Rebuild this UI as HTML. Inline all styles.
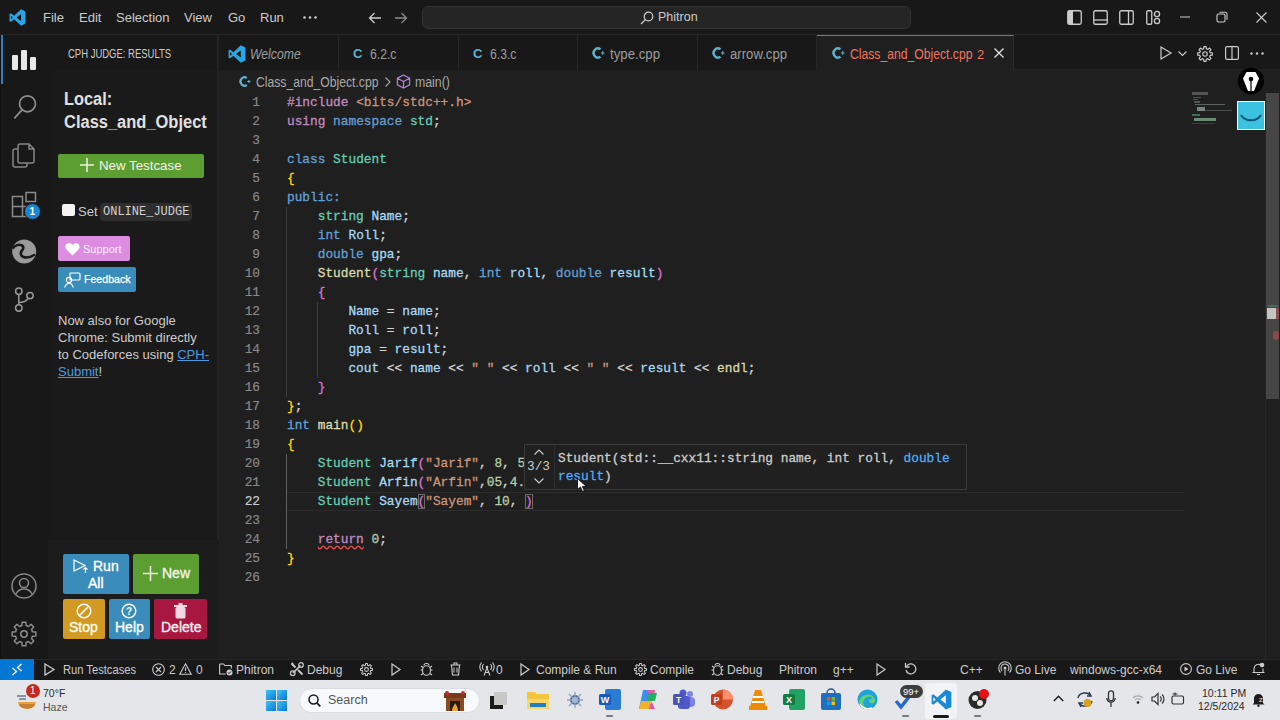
<!DOCTYPE html>
<html><head><meta charset="utf-8">
<style>
*{margin:0;padding:0;box-sizing:border-box}
html,body{width:1280px;height:720px;overflow:hidden;background:#1f1f1f;font-family:"Liberation Sans",sans-serif;color:#cccccc;position:relative}
.a{position:absolute}
.t{position:absolute;white-space:pre;line-height:1}
svg{position:absolute;overflow:visible}
#title{left:0;top:0;width:1280px;height:35px;background:#181818;border-bottom:1px solid #262626}
#act{left:0;top:35px;width:48px;height:624px;background:#181818}
#side{left:48px;top:35px;width:171px;height:624px;background:#181818;border-right:2px solid #232323}
#tabs{left:219px;top:35px;width:1061px;height:35px;background:#181818;border-bottom:1px solid #222}
#status{left:0;top:659px;width:1280px;height:21px;background:#181818;border-top:1px solid #262626}
#task{left:0;top:680px;width:1280px;height:40px;background:#e5e6e9}
.menu{font-size:13px;color:#cccccc;top:11px}
.code{font-family:"Liberation Mono",monospace;font-size:12.8px;position:absolute;left:287px;white-space:pre;height:19px;line-height:19px;color:#d4d4d4;-webkit-text-stroke:0.3px currentColor}
.ln{font-family:"Liberation Mono",monospace;font-size:12.8px;position:absolute;width:50px;left:210px;text-align:right;color:#888888;height:19px;line-height:19px;-webkit-text-stroke:0.2px currentColor}
.kw{color:#649fd4}.ct{color:#c28cbf}.ty{color:#68ccb2}.va{color:#a6d9f4}.fn{color:#dadaae}.st{color:#cb957c}.nu{color:#b7cca9}.op{color:#d4d4d4}
.b1{color:#ffd700}.b2{color:#da70d6}.b3{color:#179fff}
.tab{position:absolute;top:35px;height:35px;border-right:1px solid #262626;background:#181818}
.tabt{position:absolute;top:46.6px;font-size:14px;transform-origin:0 0;color:#9d9d9d;white-space:pre;line-height:1}
.si{position:absolute;top:663.7px;font-size:12px;color:#cccccc;white-space:pre;line-height:1}
.btn{position:absolute;color:#fff;font-size:14px;border-radius:2px}
.tb{position:absolute;font-size:12px;color:#1a1a1a;white-space:pre;line-height:1}
</style></head><body>
<!-- ============ TITLE BAR ============ -->
<div id="title" class="a"></div>
<svg style="left:9px;top:9px" width="17" height="17" viewBox="0 0 100 100"><path d="M71 2 L97 14 V86 L71 98 L30 60 L11 75 L3 70 V30 L11 25 L30 40 Z M71 30 L44 50 L71 70 Z M11 39 V61 L22 50 Z" fill="#2aa6e6" fill-rule="evenodd"/></svg>
<div class="t menu" style="left:43px">File</div>
<div class="t menu" style="left:79px">Edit</div>
<div class="t menu" style="left:116px">Selection</div>
<div class="t menu" style="left:184px">View</div>
<div class="t menu" style="left:228px">Go</div>
<div class="t menu" style="left:260px">Run</div>
<svg style="left:303px;top:16px" width="14" height="3" viewBox="0 0 14 3"><circle cx="1.5" cy="1.5" r="1.3" fill="#cccccc"/><circle cx="7" cy="1.5" r="1.3" fill="#cccccc"/><circle cx="12.5" cy="1.5" r="1.3" fill="#cccccc"/></svg>
<svg style="left:368px;top:12px" width="14" height="12" viewBox="0 0 14 12"><path d="M13 6H1.5M6.5 1L1.5 6l5 5" stroke="#cccccc" stroke-width="1.3" fill="none"/></svg>
<svg style="left:394px;top:12px" width="14" height="12" viewBox="0 0 14 12"><path d="M1 6h11.5M7.5 1l5 5-5 5" stroke="#8a8a8a" stroke-width="1.3" fill="none"/></svg>
<div class="a" style="left:422px;top:6px;width:489px;height:23px;background:#252525;border:1px solid #333;border-radius:6px"></div>
<svg style="left:640px;top:11px" width="14" height="14" viewBox="0 0 14 14"><circle cx="8.5" cy="5.5" r="4.3" stroke="#cccccc" stroke-width="1.2" fill="none"/><path d="M5.5 8.5L1 13" stroke="#cccccc" stroke-width="1.3"/></svg>
<div class="t" style="left:658px;top:11px;font-size:12.5px;color:#cccccc">Phitron</div>
<!-- layout icons -->
<svg style="left:1067px;top:10px" width="15" height="15" viewBox="0 0 15 15"><rect x="0.75" y="0.75" width="13.5" height="13.5" rx="1.5" stroke="#cccccc" stroke-width="1.3" fill="none"/><rect x="1" y="1" width="5" height="13" fill="#cccccc"/></svg>
<svg style="left:1093px;top:10px" width="15" height="15" viewBox="0 0 15 15"><rect x="0.75" y="0.75" width="13.5" height="13.5" rx="1.5" stroke="#cccccc" stroke-width="1.3" fill="none"/><path d="M1 10h13" stroke="#cccccc" stroke-width="1.3"/></svg>
<svg style="left:1119px;top:10px" width="15" height="15" viewBox="0 0 15 15"><rect x="0.75" y="0.75" width="13.5" height="13.5" rx="1.5" stroke="#cccccc" stroke-width="1.3" fill="none"/><path d="M9.5 1v13" stroke="#cccccc" stroke-width="1.3"/></svg>
<svg style="left:1146px;top:10px" width="15" height="15" viewBox="0 0 15 15"><rect x="0.75" y="0.75" width="5" height="13.5" rx="1.2" stroke="#cccccc" stroke-width="1.3" fill="none"/><circle cx="11" cy="4" r="2.6" stroke="#cccccc" stroke-width="1.3" fill="none"/><circle cx="11" cy="11" r="2.6" stroke="#cccccc" stroke-width="1.3" fill="none"/></svg>
<svg style="left:1180px;top:16px" width="11" height="2" viewBox="0 0 11 2"><path d="M0 1h10" stroke="#cccccc" stroke-width="1"/></svg>
<svg style="left:1216px;top:11px" width="12" height="12" viewBox="0 0 12 12"><rect x="1" y="3" width="8" height="8" rx="1.5" stroke="#cccccc" stroke-width="1.1" fill="none"/><path d="M3.5 1.2h5.5a2 2 0 0 1 2 2v5.5" stroke="#cccccc" stroke-width="1.1" fill="none"/></svg>
<svg style="left:1256px;top:12px" width="11" height="11" viewBox="0 0 11 11"><path d="M0.5 0.5l10 10M10.5 0.5l-10 10" stroke="#cccccc" stroke-width="1.1"/></svg>

<!-- ============ ACTIVITY BAR ============ -->
<div id="act" class="a"></div>
<div class="a" style="left:0;top:35px;width:1px;height:624px;background:#121212"></div><div class="a" style="left:1px;top:35px;width:2px;height:49px;background:#2f7bc4"></div>
<svg style="left:12px;top:48.5px" width="25" height="21" viewBox="0 0 25 21"><rect x="0" y="6" width="6" height="15" rx="1.2" fill="#e8e8e8"/><rect x="9" y="1" width="6" height="20" rx="1.2" fill="#e8e8e8"/><rect x="18" y="8" width="6" height="13" rx="1.2" fill="#e8e8e8"/></svg>
<svg style="left:13px;top:93px" width="26" height="27" viewBox="0 0 26 27"><circle cx="14.5" cy="10.8" r="8" stroke="#8e8e8e" stroke-width="1.7" fill="none"/><path d="M9 16.8L1.8 24.8" stroke="#8e8e8e" stroke-width="1.8" stroke-linecap="round"/></svg>
<svg style="left:12px;top:143px" width="24" height="25" viewBox="0 0 24 25"><path d="M8 1h9l5 5v12a2 2 0 0 1-2 2H8a2 2 0 0 1-2-2V3a2 2 0 0 1 2-2z M17 1v5h5" stroke="#858585" stroke-width="1.5" fill="none"/><path d="M6 6H3a2 2 0 0 0-2 2v14a2 2 0 0 0 2 2h10a2 2 0 0 0 2-2v-2" stroke="#858585" stroke-width="1.5" fill="none"/></svg>
<svg style="left:11px;top:191px" width="26" height="26" viewBox="0 0 26 26"><path d="M1.5 5.5h10v10h-10z M1.5 15.5h10v10h-10z M11.5 15.5h10v10h-10z M15 1.5h9.5v9h-9.5z" stroke="#8a8a8a" stroke-width="1.5" fill="none"/></svg>
<div class="a" style="left:24px;top:203px;width:17px;height:17px;border-radius:50%;background:#1a85d0;border:1.5px solid #181818"></div>
<div class="t" style="left:29.5px;top:207px;font-size:10px;font-weight:bold;color:#fff">1</div>
<svg style="left:12px;top:239px" width="25" height="25" viewBox="0 0 25 25"><circle cx="12.2" cy="12.5" r="12" fill="#9a9a9a"/><path d="M0.8 9.5C3 6 7 5 10 6.5c2 1 1.5 3.5 0 5-2 2-1.5 5.5 1.5 6.5 3 1 7 .5 11.5-2.5" stroke="#181818" stroke-width="2.6" fill="none"/></svg>
<svg style="left:14px;top:286px" width="22" height="27" viewBox="0 0 22 27"><circle cx="4.8" cy="5.2" r="3.2" stroke="#999" stroke-width="1.5" fill="none"/><circle cx="4.8" cy="22" r="3.2" stroke="#999" stroke-width="1.5" fill="none"/><circle cx="16" cy="9.6" r="3.2" stroke="#999" stroke-width="1.5" fill="none"/><path d="M4.8 8.4v10.4M14 12.3c-1.5 3-4 4-9.2 4.3" stroke="#999" stroke-width="1.5" fill="none"/></svg>
<svg style="left:11px;top:573px" width="26" height="26" viewBox="0 0 26 26"><circle cx="13" cy="13" r="12" stroke="#858585" stroke-width="1.6" fill="none"/><circle cx="13" cy="10" r="4.5" stroke="#858585" stroke-width="1.6" fill="none"/><path d="M5 21c2-4 5-5 8-5s6 1 8 5" stroke="#858585" stroke-width="1.6" fill="none"/></svg>
<svg style="left:11px;top:621px" width="26" height="26" viewBox="0 0 26 26"><path d="M21.54 10.86 L24.85 11.12 L24.85 14.88 L21.54 15.14 L20.55 17.52 L22.71 20.05 L20.05 22.71 L17.52 20.55 L15.14 21.54 L14.88 24.85 L11.12 24.85 L10.86 21.54 L8.48 20.55 L5.95 22.71 L3.29 20.05 L5.45 17.52 L4.46 15.14 L1.15 14.88 L1.15 11.12 L4.46 10.86 L5.45 8.48 L3.29 5.95 L5.95 3.29 L8.48 5.45 L10.86 4.46 L11.12 1.15 L14.88 1.15 L15.14 4.46 L17.52 5.45 L20.05 3.29 L22.71 5.95 L20.55 8.48Z" stroke="#8a8a8a" stroke-width="1.5" fill="none" stroke-linejoin="round"/><circle cx="13" cy="13" r="3.2" stroke="#8a8a8a" stroke-width="1.5" fill="none"/></svg>

<!-- ============ SIDEBAR ============ -->
<div id="side" class="a"></div>
<div class="a" style="left:52px;top:70px;width:165px;height:467px;background:#1a1a1a"></div>
<div class="a" style="left:48px;top:540px;width:171px;height:119px;background:#1c1c1c"></div>
<div class="t" style="left:68px;top:47.7px;font-size:12px;color:#cccccc;transform:scaleX(0.79);transform-origin:0 0">CPH JUDGE: RESULTS</div>
<div class="t" style="left:64px;top:90px;font-size:18px;font-weight:bold;color:#e0e0e0;transform:scaleX(0.91);transform-origin:0 0">Local:</div>
<div class="t" style="left:64px;top:113px;font-size:18px;font-weight:bold;color:#e0e0e0;transform:scaleX(0.915);transform-origin:0 0">Class_and_Object</div>
<div class="btn" style="left:58px;top:154px;width:146px;height:24px;background:#5c9e31"></div>
<svg style="left:80px;top:158px" width="14" height="14" viewBox="0 0 14 14"><path d="M7 0v14M0 7h14" stroke="#f0f0e0" stroke-width="1.5"/></svg>
<div class="t" style="left:99px;top:159px;font-size:13.3px;color:#f4f4e8">New Testcase</div>
<div class="a" style="left:62px;top:204px;width:13px;height:12px;background:#f4f4f4;border-radius:2px"></div>
<div class="t" style="left:78px;top:205px;font-size:13px;color:#cccccc">Set</div>
<div class="a" style="left:100px;top:203px;width:92px;height:18px;background:#2e2e2e;border-radius:4px"></div>
<div class="t" style="left:103px;top:206px;font-family:'Liberation Mono',monospace;font-size:12px;color:#d0d0d0">ONLINE_JUDGE</div>
<div class="btn" style="left:58px;top:236px;width:72px;height:25px;background:#dd8de0"></div>
<svg style="left:65px;top:242px" width="15" height="14" viewBox="0 0 15 14"><path d="M7.5 13.5L1.5 7.5C-0.5 5.5 0.5 1 4 1c1.7 0 2.8 1 3.5 2 0.7-1 1.8-2 3.5-2 3.5 0 4.5 4.5 2.5 6.5z" fill="#ffffff"/></svg>
<div class="t" style="left:83px;top:243.5px;font-size:11px;color:#fbeefb">Support</div>
<div class="btn" style="left:58px;top:267px;width:78px;height:25px;background:#3a8dbb"></div>
<svg style="left:64px;top:272px" width="17" height="16" viewBox="0 0 17 16"><rect x="6" y="1" width="10" height="7" rx="1" stroke="#fff" stroke-width="1.2" fill="none"/><circle cx="5" cy="8" r="2.6" stroke="#fff" stroke-width="1.2" fill="none"/><path d="M0.8 15.5c0.5-3 2-4 4.2-4s3.7 1 4.2 4" stroke="#fff" stroke-width="1.2" fill="none"/></svg>
<div class="t" style="left:84px;top:274px;font-size:10.6px;color:#ffffff;-webkit-text-stroke:0.25px #fff">Feedback</div>
<div class="t" style="left:58px;top:311.5px;font-size:13px;color:#cccccc;line-height:17.3px">Now also for Google
Chrome: Submit directly
to Codeforces using <span style="color:#4a9ae0;text-decoration:underline">CPH-</span>
<span style="color:#4a9ae0;text-decoration:underline">Submit</span>!</div>
<!-- ============ TABS ============ -->
<div id="tabs" class="a"></div>
<div class="tab" style="left:219px;width:120px"></div>
<div class="tab" style="left:339px;width:120px"></div>
<div class="tab" style="left:459px;width:119px"></div>
<div class="tab" style="left:578px;width:120px"></div>
<div class="tab" style="left:698px;width:119px"></div>
<div class="a" style="left:817px;top:35px;width:197px;height:36px;background:#1f1f1f;border-top:1px solid #3b8eb0;border-right:1px solid #2b2b2b"></div>
<svg style="left:228px;top:45px" width="18" height="18" viewBox="0 0 100 100"><path d="M71 2 L97 14 V86 L71 98 L30 60 L11 75 L3 70 V30 L11 25 L30 40 Z M71 30 L44 50 L71 70 Z M11 39 V61 L22 50 Z" fill="#2aa6e6" fill-rule="evenodd"/></svg>
<div class="tabt" style="left:250px;font-style:italic;transform:scaleX(0.873)">Welcome</div>
<div class="tabt" style="left:353px;top:47px;font-weight:bold;color:#5fb2cf;font-size:13px">C</div>
<div class="tabt" style="left:370px;transform:scaleX(0.87)">6.2.c</div>
<div class="tabt" style="left:473px;top:47px;font-weight:bold;color:#5fb2cf;font-size:13px">C</div>
<div class="tabt" style="left:490px;transform:scaleX(0.87)">6.3.c</div>
<svg style="left:592px;top:47px" width="13" height="12" viewBox="0 0 13 12"><path d="M8.5 2.2A4.5 4.5 0 1 0 8.5 9.8" stroke="#5fb2cf" stroke-width="2.4" fill="none"/><path d="M9 6h3.5M10.75 4.25v3.5" stroke="#5fb2cf" stroke-width="1.1"/></svg>
<div class="tabt" style="left:610px;transform:scaleX(0.945)">type.cpp</div>
<svg style="left:712px;top:47px" width="13" height="12" viewBox="0 0 13 12"><path d="M8.5 2.2A4.5 4.5 0 1 0 8.5 9.8" stroke="#5fb2cf" stroke-width="2.4" fill="none"/><path d="M9 6h3.5M10.75 4.25v3.5" stroke="#5fb2cf" stroke-width="1.1"/></svg>
<div class="tabt" style="left:730px;transform:scaleX(0.94)">arrow.cpp</div>
<svg style="left:832px;top:47px" width="13" height="12" viewBox="0 0 13 12"><path d="M8.5 2.2A4.5 4.5 0 1 0 8.5 9.8" stroke="#5fb2cf" stroke-width="2.4" fill="none"/><path d="M9 6h3.5M10.75 4.25v3.5" stroke="#5fb2cf" stroke-width="1.1"/></svg>
<div class="tabt" style="left:850px;color:#f0755f;transform:scaleX(0.869)">Class_and_Object.cpp</div>
<div class="tabt" style="left:977px;color:#f0755f;font-size:13px;top:47.5px">2</div>
<svg style="left:994px;top:48px" width="10" height="10" viewBox="0 0 10 10"><path d="M0.5 0.5l9 9M9.5 0.5l-9 9" stroke="#e0e0e0" stroke-width="1.4"/></svg>
<svg style="left:1160px;top:46px" width="12" height="14" viewBox="0 0 12 14"><path d="M1 1l10 6-10 6z" stroke="#cccccc" stroke-width="1.2" fill="none"/></svg>
<svg style="left:1178px;top:51px" width="9" height="5" viewBox="0 0 9 5"><path d="M0.5 0.5l4 4 4-4" stroke="#cccccc" stroke-width="1.1" fill="none"/></svg>
<svg style="left:1197px;top:46px" width="16" height="16" viewBox="0 0 26 26"><path d="M21.54 10.86 L24.85 11.12 L24.85 14.88 L21.54 15.14 L20.55 17.52 L22.71 20.05 L20.05 22.71 L17.52 20.55 L15.14 21.54 L14.88 24.85 L11.12 24.85 L10.86 21.54 L8.48 20.55 L5.95 22.71 L3.29 20.05 L5.45 17.52 L4.46 15.14 L1.15 14.88 L1.15 11.12 L4.46 10.86 L5.45 8.48 L3.29 5.95 L5.95 3.29 L8.48 5.45 L10.86 4.46 L11.12 1.15 L14.88 1.15 L15.14 4.46 L17.52 5.45 L20.05 3.29 L22.71 5.95 L20.55 8.48Z" stroke="#cccccc" stroke-width="1.9" fill="none" stroke-linejoin="round"/><circle cx="13" cy="13" r="3.6" stroke="#cccccc" stroke-width="1.9" fill="none"/></svg>
<svg style="left:1225px;top:46px" width="14" height="14" viewBox="0 0 14 14"><rect x="0.6" y="0.6" width="12.8" height="12.8" rx="1.5" stroke="#cccccc" stroke-width="1.2" fill="none"/><path d="M7 1v12" stroke="#cccccc" stroke-width="1.2"/></svg>
<svg style="left:1250px;top:52px" width="14" height="3" viewBox="0 0 14 3"><circle cx="1.5" cy="1.5" r="1.2" fill="#cccccc"/><circle cx="7" cy="1.5" r="1.2" fill="#cccccc"/><circle cx="12.5" cy="1.5" r="1.2" fill="#cccccc"/></svg>
<!-- breadcrumbs -->
<svg style="left:239px;top:76px" width="12" height="11" viewBox="0 0 13 12"><path d="M8.5 2.2A4.5 4.5 0 1 0 8.5 9.8" stroke="#5fb2cf" stroke-width="2.4" fill="none"/><path d="M9 6h3.5M10.75 4.25v3.5" stroke="#5fb2cf" stroke-width="1.1"/></svg>
<div class="t" style="left:256px;top:75.2px;font-size:14px;color:#a9a9a9;transform:scaleX(0.869);transform-origin:0 0">Class_and_Object.cpp</div>
<svg style="left:385px;top:77px" width="6" height="10" viewBox="0 0 6 10"><path d="M0.5 0.5l4.5 4.5-4.5 4.5" stroke="#a9a9a9" stroke-width="1.1" fill="none"/></svg>
<svg style="left:396px;top:74px" width="15" height="15" viewBox="0 0 16 16"><path d="M8 1l6.5 3.5v7L8 15 1.5 11.5v-7z M1.5 4.5L8 8l6.5-3.5 M8 8v7" stroke="#b180d7" stroke-width="1.3" fill="none"/></svg>
<div class="t" style="left:415px;top:75.2px;font-size:14px;color:#a9a9a9;transform:scaleX(0.88);transform-origin:0 0">main()</div>
<!-- ============ EDITOR ============ -->
<div class="ln" style="top:93px">1</div>
<div class="ln" style="top:112px">2</div>
<div class="ln" style="top:131px">3</div>
<div class="ln" style="top:150px">4</div>
<div class="ln" style="top:169px">5</div>
<div class="ln" style="top:188px">6</div>
<div class="ln" style="top:207px">7</div>
<div class="ln" style="top:226px">8</div>
<div class="ln" style="top:245px">9</div>
<div class="ln" style="top:264px">10</div>
<div class="ln" style="top:283px">11</div>
<div class="ln" style="top:302px">12</div>
<div class="ln" style="top:321px">13</div>
<div class="ln" style="top:340px">14</div>
<div class="ln" style="top:359px">15</div>
<div class="ln" style="top:378px">16</div>
<div class="ln" style="top:397px">17</div>
<div class="ln" style="top:416px">18</div>
<div class="ln" style="top:435px">19</div>
<div class="ln" style="top:454px">20</div>
<div class="ln" style="top:473px">21</div>
<div class="ln" style="top:492px;color:#cccccc">22</div>
<div class="ln" style="top:511px">23</div>
<div class="ln" style="top:530px">24</div>
<div class="ln" style="top:549px">25</div>
<div class="ln" style="top:568px">26</div>
<!-- indent guides -->
<div class="a" style="left:286px;top:207px;width:1px;height:190px;background:#404040"></div>
<div class="a" style="left:317px;top:302px;width:1px;height:76px;background:#404040"></div>
<div class="a" style="left:286px;top:454px;width:1px;height:95px;background:#606060"></div>
<!-- current line -->
<div class="a" style="left:287px;top:492px;width:898px;height:19px;border-top:1px solid #2c2c2c;border-bottom:1px solid #2c2c2c"></div>
<div class="code" style="top:93px"><span class="ct">#include</span> <span class="st">&lt;bits/stdc++.h&gt;</span></div>
<div class="code" style="top:112px"><span class="ct">using</span> <span class="kw">namespace</span> <span class="ty">std</span>;</div>
<div class="code" style="top:150px"><span class="kw">class</span> <span class="ty">Student</span></div>
<div class="code" style="top:169px"><span class="b1">{</span></div>
<div class="code" style="top:188px"><span class="kw">public:</span></div>
<div class="code" style="top:207px">    <span class="ty">string</span> <span class="va">Name</span>;</div>
<div class="code" style="top:226px">    <span class="kw">int</span> <span class="va">Roll</span>;</div>
<div class="code" style="top:245px">    <span class="kw">double</span> <span class="va">gpa</span>;</div>
<div class="code" style="top:264px">    <span class="fn">Student</span><span class="b2">(</span><span class="ty">string</span> <span class="va">name</span>, <span class="kw">int</span> <span class="va">roll</span>, <span class="kw">double</span> <span class="va">result</span><span class="b2">)</span></div>
<div class="code" style="top:283px">    <span class="b2">{</span></div>
<div class="code" style="top:302px">        <span class="va">Name</span> = <span class="va">name</span>;</div>
<div class="code" style="top:321px">        <span class="va">Roll</span> = <span class="va">roll</span>;</div>
<div class="code" style="top:340px">        <span class="va">gpa</span> = <span class="va">result</span>;</div>
<div class="code" style="top:359px">        <span class="va">cout</span> &lt;&lt; <span class="va">name</span> &lt;&lt; <span class="st">" "</span> &lt;&lt; <span class="va">roll</span> &lt;&lt; <span class="st">" "</span> &lt;&lt; <span class="va">result</span> &lt;&lt; <span class="fn">endl</span>;</div>
<div class="code" style="top:378px">    <span class="b2">}</span></div>
<div class="code" style="top:397px"><span class="b1">}</span>;</div>
<div class="code" style="top:416px"><span class="kw">int</span> <span class="fn">main</span><span class="b1">()</span></div>
<div class="code" style="top:435px"><span class="b1">{</span></div>
<div class="code" style="top:454px">    <span class="ty">Student</span> <span class="va">Jarif</span><span class="b2">(</span><span class="st">"Jarif"</span>, <span class="nu">8</span>, <span class="nu">5</span></div>
<div class="code" style="top:473px">    <span class="ty">Student</span> <span class="va">Arfin</span><span class="b2">(</span><span class="st">"Arfin"</span>,<span class="nu">05</span>,<span class="nu">4.</span></div>
<div class="code" style="top:492px">    <span class="ty">Student</span> <span class="va">Sayem</span><span class="b2" style="outline:1px solid #6a6a6a;outline-offset:-1px">(</span><span class="st">"Sayem"</span>, <span class="nu">10</span>, <span class="b2" style="outline:1px solid #6a6a6a;outline-offset:-1px">)</span></div>
<div class="code" style="top:530px">    <span class="ct" style="text-decoration:underline wavy #f14c4c;text-underline-offset:2px">return</span> <span class="nu">0</span>;</div>
<div class="code" style="top:549px"><span class="b1">}</span></div>
<!-- hover widget -->
<div class="a" style="left:524px;top:444px;width:443px;height:46px;background:#202020;border:1px solid #3a3a3a"></div>
<div class="a" style="left:554px;top:445px;width:1px;height:44px;background:#2e2e2e"></div>
<svg style="left:534px;top:449px" width="10" height="6" viewBox="0 0 10 6"><path d="M0.5 5.5l4.5-4.5 4.5 4.5" stroke="#cccccc" stroke-width="1.1" fill="none"/></svg>
<svg style="left:534px;top:478px" width="10" height="6" viewBox="0 0 10 6"><path d="M0.5 0.5l4.5 4.5 4.5-4.5" stroke="#cccccc" stroke-width="1.1" fill="none"/></svg>
<div class="t" style="left:527px;top:461px;font-family:'Liberation Mono',monospace;font-size:12.75px;color:#cccccc">3/3</div>
<div class="code" style="left:558px;top:449px;color:#cccccc">Student(std::__cxx11::string name, int roll, <span style="color:#4daafc">double</span></div>
<div class="code" style="left:558px;top:467px;color:#cccccc"><span style="color:#4daafc">result</span>)</div>
<!-- mouse cursor -->
<svg style="left:577px;top:478px" width="9" height="14" viewBox="0 0 9 14"><path d="M0.5 0.5v11l3-2.5 2 4.5 1.8-.8-2-4.3h4z" fill="#ffffff" stroke="#000" stroke-width="0.8"/></svg>
<!-- minimap -->
<div class="a" style="left:1265px;top:92px;width:15px;height:567px;background:#1f1f1f;border-left:1px solid #262626"></div>
<div class="a" style="left:1266px;top:93px;width:13px;height:306px;background:#464646"></div>
<div class="a" style="left:1192px;top:92px;width:16px;height:3px;background:#555"></div>
<div class="a" style="left:1193px;top:97px;width:8px;height:1px;background:#3f5a52"></div>
<div class="a" style="left:1193px;top:99px;width:5px;height:1px;background:#3f5a52"></div>
<div class="a" style="left:1194px;top:101px;width:6px;height:2px;background:#4a5a55"></div>
<div class="a" style="left:1195px;top:104px;width:30px;height:1px;background:#5a6560"></div>
<div class="a" style="left:1197px;top:107px;width:8px;height:4px;background:#7a8580"></div>
<div class="a" style="left:1205px;top:110px;width:27px;height:1px;background:#4a4f4d"></div>
<div class="a" style="left:1192px;top:114px;width:8px;height:2px;background:#3f6a55"></div>
<div class="a" style="left:1194px;top:118px;width:22px;height:3px;background:#6a8a78"></div>
<div class="a" style="left:1192px;top:123px;width:23px;height:1px;background:#6a2a2a"></div>
<svg style="left:1238px;top:68px" width="26" height="26" viewBox="0 0 26 26"><circle cx="13" cy="13" r="13.2" fill="#000"/><path d="M8.5 4H17.5L21 10.5L16 23H10L5 10.5Z" fill="#fff"/><circle cx="13" cy="11" r="2.3" fill="#000"/><rect x="12.4" y="11" width="1.2" height="12" fill="#000"/></svg>
<div class="a" style="left:1237px;top:101px;width:28px;height:29px;background:#3bc2e0;border:1.5px solid #f0f8ff"></div>
<svg style="left:1240px;top:113px" width="22" height="9" viewBox="0 0 22 9"><path d="M1 2c4 7 16 7 20 0" stroke="#0d5570" stroke-width="2" fill="none"/></svg>
<div class="a" style="left:1267px;top:308px;width:9px;height:11px;background:#c4c4c4"></div><div class="a" style="left:1276px;top:308px;width:3px;height:11px;background:#8a5050"></div><div class="a" style="left:1268px;top:305px;width:10px;height:2px;background:#4a6a55"></div><div class="a" style="left:1273px;top:331px;width:6px;height:9px;background:#8a4a4a;border-radius:3px"></div>
<!-- ============ STATUS BAR ============ -->
<div id="status" class="a"></div>
<div class="a" style="left:0;top:659px;width:34px;height:21px;background:#0078d4"></div>
<svg style="left:11px;top:663px" width="12" height="13" viewBox="0 0 12 13"><path d="M10.5 1L6.5 4.5 10.5 8 M1.5 5L5.5 8.5 1.5 12" stroke="#ffffff" stroke-width="1.3" fill="none"/></svg>
<svg style="left:44px;top:663px" width="11" height="13" viewBox="0 0 11 13"><path d="M1 1l9 5.5-9 5.5z" stroke="#cccccc" stroke-width="1.3" fill="none"/></svg>
<div class="si" style="left:63px;transform:scaleX(0.93);transform-origin:0 0">Run Testcases</div>
<svg style="left:152px;top:663px" width="13" height="13" viewBox="0 0 13 13"><circle cx="6.5" cy="6.5" r="5.8" stroke="#cccccc" stroke-width="1.1" fill="none"/><path d="M4 4l5 5M9 4l-5 5" stroke="#cccccc" stroke-width="1.1"/></svg>
<div class="si" style="left:169px">2</div>
<svg style="left:179px;top:663px" width="13" height="12" viewBox="0 0 13 12"><path d="M6.5 0.8L12.2 11.2H0.8z" stroke="#cccccc" stroke-width="1.1" fill="none"/><path d="M6.5 4.5v3.5M6.5 9v1" stroke="#cccccc" stroke-width="1.1"/></svg>
<div class="si" style="left:196px">0</div>
<svg style="left:219px;top:662px" width="14" height="14" viewBox="0 0 14 14"><path d="M0.6 2h4l1.2 1.5h6.5v3 M0.6 2v10h6" stroke="#cccccc" stroke-width="1.1" fill="none"/><circle cx="10.5" cy="10.5" r="3" fill="#cccccc"/><path d="M9 10.5l1 1 2-2" stroke="#181818" stroke-width="1" fill="none"/></svg>
<div class="si" style="left:236px">Phitron</div>
<svg style="left:290px;top:662px" width="14" height="14" viewBox="0 0 14 14"><path d="M1.5 1.5l4 4M8 8l4.5 4.5" stroke="#cccccc" stroke-width="1.8"/><path d="M1 1l1.5 -0.5 1 1 -0.5 1.5z" fill="#cccccc"/><path d="M3 11l7.5-7.5" stroke="#cccccc" stroke-width="1.6"/><circle cx="11" cy="3" r="2.3" stroke="#cccccc" stroke-width="1.2" fill="none"/><circle cx="2.8" cy="11.2" r="2.3" stroke="#cccccc" stroke-width="1.2" fill="none"/></svg>
<div class="si" style="left:307px">Debug</div>
<svg style="left:360px;top:663px" width="13" height="13" viewBox="0 0 26 26"><path d="M21.54 10.86 L24.85 11.12 L24.85 14.88 L21.54 15.14 L20.55 17.52 L22.71 20.05 L20.05 22.71 L17.52 20.55 L15.14 21.54 L14.88 24.85 L11.12 24.85 L10.86 21.54 L8.48 20.55 L5.95 22.71 L3.29 20.05 L5.45 17.52 L4.46 15.14 L1.15 14.88 L1.15 11.12 L4.46 10.86 L5.45 8.48 L3.29 5.95 L5.95 3.29 L8.48 5.45 L10.86 4.46 L11.12 1.15 L14.88 1.15 L15.14 4.46 L17.52 5.45 L20.05 3.29 L22.71 5.95 L20.55 8.48Z" stroke="#cccccc" stroke-width="2.1" fill="none" stroke-linejoin="round"/><circle cx="13" cy="13" r="3.8" stroke="#cccccc" stroke-width="2.1" fill="none"/></svg>
<svg style="left:391px;top:663px" width="10" height="13" viewBox="0 0 10 13"><path d="M1 1l8 5.5-8 5.5z" stroke="#cccccc" stroke-width="1.2" fill="none"/></svg>
<svg style="left:420px;top:662px" width="13" height="14" viewBox="0 0 13 14"><ellipse cx="6.5" cy="8.5" rx="4" ry="4.8" stroke="#cccccc" stroke-width="1.1" fill="none"/><path d="M4 3.5a2.5 2 0 0 1 5 0M0.5 8h2M10.5 8h2M1 4l2 1.5M12 4l-2 1.5M1 13l2-1.5M12 13l-2-1.5" stroke="#cccccc" stroke-width="1.1" fill="none"/></svg>
<svg style="left:450px;top:662px" width="11" height="14" viewBox="0 0 11 14"><path d="M0.5 3h10M4 3V1h3v2M1.5 3l1 10h6l1-10" stroke="#cccccc" stroke-width="1.1" fill="none"/><path d="M4 5.5v5M7 5.5v5" stroke="#cccccc" stroke-width="1"/></svg>
<svg style="left:480px;top:662px" width="14" height="14" viewBox="0 0 14 14"><circle cx="7" cy="5" r="1.3" fill="#cccccc"/><path d="M7 6l-3 7.5M7 6l3 7.5M5 10.5h4M3.5 2a5 5 0 0 0 0 6M10.5 2a5 5 0 0 1 0 6M1.5 0.5a7.5 7.5 0 0 0 0 9M12.5 0.5a7.5 7.5 0 0 1 0 9" stroke="#cccccc" stroke-width="1.1" fill="none"/></svg>
<div class="si" style="left:496px">0</div>
<svg style="left:520px;top:663px" width="10" height="13" viewBox="0 0 10 13"><path d="M1 1l8 5.5-8 5.5z" stroke="#cccccc" stroke-width="1.2" fill="none"/></svg>
<div class="si" style="left:536px">Compile &amp; Run</div>
<svg style="left:634px;top:663px" width="13" height="13" viewBox="0 0 26 26"><path d="M21.54 10.86 L24.85 11.12 L24.85 14.88 L21.54 15.14 L20.55 17.52 L22.71 20.05 L20.05 22.71 L17.52 20.55 L15.14 21.54 L14.88 24.85 L11.12 24.85 L10.86 21.54 L8.48 20.55 L5.95 22.71 L3.29 20.05 L5.45 17.52 L4.46 15.14 L1.15 14.88 L1.15 11.12 L4.46 10.86 L5.45 8.48 L3.29 5.95 L5.95 3.29 L8.48 5.45 L10.86 4.46 L11.12 1.15 L14.88 1.15 L15.14 4.46 L17.52 5.45 L20.05 3.29 L22.71 5.95 L20.55 8.48Z" stroke="#cccccc" stroke-width="2.1" fill="none" stroke-linejoin="round"/><circle cx="13" cy="13" r="3.8" stroke="#cccccc" stroke-width="2.1" fill="none"/></svg>
<div class="si" style="left:650px">Compile</div>
<svg style="left:711px;top:662px" width="13" height="14" viewBox="0 0 13 14"><ellipse cx="6.5" cy="8.5" rx="4" ry="4.8" stroke="#cccccc" stroke-width="1.1" fill="none"/><path d="M4 3.5a2.5 2 0 0 1 5 0M0.5 8h2M10.5 8h2M1 4l2 1.5M12 4l-2 1.5M1 13l2-1.5M12 13l-2-1.5" stroke="#cccccc" stroke-width="1.1" fill="none"/></svg>
<div class="si" style="left:727px">Debug</div>
<div class="si" style="left:779px">Phitron</div>
<div class="si" style="left:833px">g++</div>
<svg style="left:876px;top:663px" width="10" height="13" viewBox="0 0 10 13"><path d="M1 1l8 5.5-8 5.5z" stroke="#cccccc" stroke-width="1.2" fill="none"/></svg>
<svg style="left:904px;top:662px" width="13" height="13" viewBox="0 0 13 13"><path d="M2.5 4.5A5 5 0 1 1 2 8" stroke="#cccccc" stroke-width="1.3" fill="none"/><path d="M1.5 1v4h4" stroke="#cccccc" stroke-width="1.3" fill="none"/></svg>
<div class="si" style="left:960px">C++</div>
<svg style="left:999px;top:662px" width="12" height="14" viewBox="0 0 12 14"><circle cx="6" cy="6" r="1.5" fill="#cccccc"/><path d="M6 7.5V13.5M3.2 8.8a4 4 0 1 1 5.6 0M1.5 10.5a6.3 6.3 0 1 1 9 0" stroke="#cccccc" stroke-width="1.1" fill="none"/></svg>
<div class="si" style="left:1015px">Go Live</div>
<div class="si" style="left:1070px">windows-gcc-x64</div>
<svg style="left:1180px;top:663px" width="12" height="12" viewBox="0 0 12 12"><circle cx="6" cy="6" r="5.4" stroke="#cccccc" stroke-width="1.1" fill="none"/><path d="M4.5 3.5l4 2.5-4 2.5z" fill="#cccccc"/></svg>
<div class="si" style="left:1196px">Go Live</div>
<svg style="left:1252px;top:662px" width="13" height="14" viewBox="0 0 13 14"><path d="M2 10.5V6.5a4.5 4.5 0 0 1 7-3.5M11 6.5v4M0.5 10.5h12M5 12.5h3" stroke="#cccccc" stroke-width="1.1" fill="none"/><circle cx="10" cy="3" r="2.3" fill="#cccccc"/></svg>
<!-- ============ TASKBAR ============ -->
<div id="task" class="a"></div>
<svg style="left:16px;top:690px" width="22" height="22" viewBox="0 0 22 22"><path d="M2 12a9 6 0 0 0 18 0z" fill="#e8a040"/><path d="M3 14a8 5 0 0 0 16 0" fill="#c8802a"/><path d="M1 6h9M3 9h7" stroke="#6a7a8a" stroke-width="1.4"/></svg>
<div class="a" style="left:26px;top:684px;width:14px;height:14px;border-radius:50%;background:#c42b1c"></div>
<div class="t" style="left:30px;top:686px;font-size:10px;color:#fff">1</div>
<div class="tb" style="left:43px;top:688px;font-size:10.5px;color:#2a2a2a">70°F</div>
<div class="tb" style="left:43px;top:702px;font-size:10.5px;color:#555">Haze</div>
<svg style="left:266px;top:690px" width="21" height="21" viewBox="0 0 21 21"><defs><linearGradient id="wg" x1="0" y1="0" x2="1" y2="1"><stop offset="0" stop-color="#3ec3f5"/><stop offset="1" stop-color="#0a78d4"/></linearGradient></defs><rect x="0" y="0" width="10" height="10" fill="url(#wg)"/><rect x="11" y="0" width="10" height="10" fill="url(#wg)"/><rect x="0" y="11" width="10" height="10" fill="url(#wg)"/><rect x="11" y="11" width="10" height="10" fill="url(#wg)"/></svg>
<div class="a" style="left:299px;top:688px;width:181px;height:25px;background:#f8f9fb;border:1px solid #dcdde0;border-radius:13px"></div>
<svg style="left:308px;top:694px" width="13" height="13" viewBox="0 0 13 13"><circle cx="5.5" cy="5.5" r="4.5" stroke="#1a1a1a" stroke-width="1.5" fill="none"/><path d="M8.8 8.8L12.3 12.3" stroke="#1a1a1a" stroke-width="1.7"/></svg>
<div class="tb" style="left:328px;top:694px;font-size:12.5px;color:#555">Search</div>
<svg style="left:443px;top:690px" width="24" height="21" viewBox="0 0 24 21"><rect x="1" y="3" width="22" height="5" fill="#7a3a1a"/><rect x="3" y="8" width="18" height="13" fill="#8a4a22"/><rect x="7" y="11" width="10" height="10" fill="#2a1a10"/><path d="M9 21c0-4 3-6 3-8 1 2 3 4 3 8z" fill="#f0a030"/><circle cx="4" cy="3" r="2" fill="#c03030"/><circle cx="20" cy="3" r="2" fill="#c03030"/></svg>
<svg style="left:490px;top:692px" width="17" height="17" viewBox="0 0 17 17"><rect x="4" y="0" width="13" height="13" fill="#c8c8c8"/><path d="M0 4h4v9h9v4H0z" fill="#1a1a1a"/></svg>
<svg style="left:527px;top:690px" width="22" height="19" viewBox="0 0 22 19"><path d="M0 2h8l2 2h12v15H0z" fill="#f2c53d"/><rect x="0" y="9" width="22" height="10" fill="#f6d66a"/><rect x="3" y="13" width="16" height="4" fill="#1f7fbf"/></svg>
<svg style="left:565px;top:690px" width="20" height="20" viewBox="0 0 20 20"><circle cx="10" cy="10" r="5" fill="#5a6a8a"/><path d="M2 10h16M10 2v16M4 4l12 12M16 4L4 16" stroke="#8aa0c0" stroke-width="1.3"/><circle cx="10" cy="10" r="3" fill="#a0b8d8"/></svg>
<svg style="left:599px;top:689px" width="22" height="21" viewBox="0 0 22 21"><rect x="6" y="0" width="16" height="21" rx="2" fill="#2b7cd3"/><rect x="0" y="5" width="12" height="11" rx="1.5" fill="#185abd"/><text x="6" y="14" font-size="9" font-weight="bold" font-family="Liberation Sans" text-anchor="middle" fill="#fff">W</text></svg>
<div class="a" style="left:606px;top:715px;width:7px;height:2px;background:#7a7a7a;border-radius:1px"></div>
<svg style="left:637px;top:689px" width="22" height="21" viewBox="0 0 22 21"><path d="M6 1h8l-4 19H2z" fill="#3a8ef0"/><path d="M10 1h8l-2 10-6 9h8l-4-9z" fill="#e05aa0"/><path d="M4 12h10l-2 8H2z" fill="#f0b030"/><path d="M12 4h8l-2 8h-8z" fill="#20b060"/></svg>
<svg style="left:673px;top:689px" width="22" height="21" viewBox="0 0 22 21"><circle cx="17" cy="5" r="3" fill="#7b83eb"/><rect x="12" y="8" width="10" height="10" rx="4" fill="#7b83eb"/><circle cx="10" cy="4" r="3.5" fill="#5059c9"/><rect x="5" y="7" width="12" height="13" rx="3" fill="#5059c9"/><rect x="0" y="5" width="11" height="11" rx="1.5" fill="#4b53bc"/><text x="5.5" y="13.5" font-size="8.5" font-weight="bold" font-family="Liberation Sans" text-anchor="middle" fill="#fff">T</text></svg>
<svg style="left:711px;top:689px" width="22" height="21" viewBox="0 0 22 21"><circle cx="12" cy="10.5" r="10" fill="#d35230"/><path d="M12 0.5a10 10 0 0 1 10 10H12z" fill="#ff8f6b"/><rect x="0" y="5" width="11" height="11" rx="1.5" fill="#c43e1c"/><text x="5.5" y="13.5" font-size="8.5" font-weight="bold" font-family="Liberation Sans" text-anchor="middle" fill="#fff">P</text></svg>
<svg style="left:749px;top:689px" width="18" height="21" viewBox="0 0 18 21"><path d="M6 1h6l5 17H1z" fill="#f08a00"/><path d="M4 8h10M3 13h12" stroke="#fff" stroke-width="2"/><rect x="0" y="17" width="18" height="4" fill="#f08a00"/></svg>
<svg style="left:783px;top:689px" width="22" height="21" viewBox="0 0 22 21"><rect x="6" y="0" width="16" height="21" rx="2" fill="#21a366"/><rect x="0" y="5" width="12" height="11" rx="1.5" fill="#107c41"/><text x="6" y="14" font-size="9" font-weight="bold" font-family="Liberation Sans" text-anchor="middle" fill="#fff">X</text></svg>
<svg style="left:821px;top:689px" width="20" height="21" viewBox="0 0 20 21"><path d="M6 4a4 4 0 0 1 8 0" stroke="#1a5aa0" stroke-width="1.5" fill="none"/><rect x="0" y="4" width="20" height="17" rx="2" fill="#1f6fc0"/><rect x="6" y="8" width="3.5" height="3.5" fill="#f25022"/><rect x="10.5" y="8" width="3.5" height="3.5" fill="#7fba00"/><rect x="6" y="12.5" width="3.5" height="3.5" fill="#00a4ef"/><rect x="10.5" y="12.5" width="3.5" height="3.5" fill="#ffb900"/></svg>
<svg style="left:857px;top:689px" width="21" height="21" viewBox="0 0 21 21"><circle cx="10.5" cy="10.5" r="10" fill="#1fa0e0"/><path d="M2 13c1-6 7-9 12-7 4 2 5 6 3 8-2 1-5 0-5-2 0-3 4-2 4-2-1-3-7-3-9 1-2 3 0 7 4 8-6 0-9-3-9-6z" fill="#5fd36f"/><path d="M3 15c2 4 7 6 12 4" stroke="#fff" stroke-width="1.5" fill="none"/></svg>
<svg style="left:895px;top:692px" width="18" height="17" viewBox="0 0 18 17"><path d="M1 9l5 6 11-14" stroke="#2a6ad0" stroke-width="3.5" fill="none"/></svg>
<div class="a" style="left:900px;top:685px;width:23px;height:13px;border-radius:7px;background:#3c3c3c"></div>
<div class="tb" style="left:903px;top:687px;font-size:9.5px;color:#fff">99+</div>
<div class="a" style="left:902px;top:715px;width:7px;height:2px;background:#7a7a7a;border-radius:1px"></div>
<div class="a" style="left:925px;top:683px;width:32px;height:36px;background:#f2f3f6;border-radius:4px"></div>
<svg style="left:931px;top:689px" width="21" height="21" viewBox="0 0 100 100"><path d="M71 2 L97 14 V86 L71 98 L30 60 L11 75 L3 70 V30 L11 25 L30 40 Z M71 30 L44 50 L71 70 Z M11 39 V61 L22 50 Z" fill="#1a8ad4" fill-rule="evenodd"/></svg>
<div class="a" style="left:933px;top:715px;width:16px;height:3px;background:#1a1a1a;border-radius:2px"></div>
<svg style="left:968px;top:689px" width="22" height="21" viewBox="0 0 22 21"><circle cx="9.5" cy="11" r="9" fill="#2a2a2a"/><circle cx="7" cy="9" r="3" fill="#e8e8e8"/><circle cx="12" cy="14" r="3" fill="#e8e8e8"/><circle cx="16" cy="5" r="5" fill="#e81010"/></svg>
<div class="a" style="left:974px;top:715px;width:7px;height:2px;background:#7a7a7a;border-radius:1px"></div>
<svg style="left:1053px;top:695px" width="11" height="7" viewBox="0 0 11 7"><path d="M0.8 6l4.7-4.7L10.2 6" stroke="#1a1a1a" stroke-width="1.4" fill="none"/></svg>
<svg style="left:1076px;top:690px" width="18" height="19" viewBox="0 0 18 19"><path d="M2 8a7 6 0 0 1 13-2M16 11a7 6 0 0 1-13 2" stroke="#2a3a5a" stroke-width="1.4" fill="none"/><path d="M13 2l2 4-4 0M5 17l-2-4 4 0" stroke="#2a3a5a" stroke-width="1.4" fill="none"/><circle cx="11.5" cy="13" r="4" fill="#d8a020"/></svg>
<svg style="left:1106px;top:690px" width="10" height="18" viewBox="0 0 10 18"><rect x="2.5" y="0.8" width="5" height="10" rx="2.5" stroke="#333" stroke-width="1.3" fill="none"/><path d="M0.8 8a4.2 4.2 0 0 0 8.4 0M5 12.5V17" stroke="#333" stroke-width="1.3" fill="none"/></svg>
<svg style="left:1132px;top:694px" width="12" height="10" viewBox="0 0 12 10"><path d="M1 4a7 7 0 0 1 10 0M3 6a4.2 4.2 0 0 1 6 0" stroke="#aaa" stroke-width="1.2" fill="none"/><circle cx="6" cy="8.5" r="1.3" fill="#1a1a1a"/></svg>
<svg style="left:1151px;top:692px" width="14" height="14" viewBox="0 0 14 14"><path d="M1 5h2.5L7 1.5v11L3.5 9H1z" stroke="#333" stroke-width="1.2" fill="none"/><path d="M9 4.5a3 3 0 0 1 0 5M11 2.5a6 6 0 0 1 0 9" stroke="#333" stroke-width="1.2" fill="none"/></svg>
<svg style="left:1171px;top:692px" width="14" height="14" viewBox="0 0 14 14"><rect x="1" y="4" width="11.5" height="8" rx="1.5" stroke="#333" stroke-width="1.2" fill="none"/><path d="M4 0.5v3M1.5 2h5" stroke="#333" stroke-width="1.2"/></svg>
<div class="tb" style="left:1202px;top:688px;font-size:10.5px;color:#2a2a2a">10:11 PM</div>
<div class="tb" style="left:1198px;top:701px;font-size:10.5px;color:#2a2a2a">12/5/2024</div>
<svg style="left:1252px;top:692px" width="13" height="15" viewBox="0 0 13 15"><path d="M2 11V6.5a4.5 4.5 0 0 1 9 0V11l1.5 1.5H0.5z" fill="#1c1c1c"/><circle cx="6.5" cy="13.8" r="1.2" fill="#1c1c1c"/><text x="7" y="9.5" font-size="6" font-family="Liberation Sans" fill="#fff">Z</text></svg>
<!-- bottom buttons -->
<div class="btn" style="left:63px;top:554px;width:66px;height:40px;background:#3a8dbb"></div>
<svg style="left:73px;top:559px" width="16" height="14" viewBox="0 0 16 14"><path d="M1 1L12 6.5 1 12z" stroke="#fff" stroke-width="1.2" fill="none"/><path d="M12.5 14V8.5M10.5 10.5l2-2 2 2" stroke="#fff" stroke-width="1.1" fill="none"/></svg>
<div class="t" style="left:93px;top:559px;font-size:14px;color:#fff;-webkit-text-stroke:0.35px #fff">Run</div>
<div class="t" style="left:88px;top:576px;font-size:14px;color:#fff;-webkit-text-stroke:0.35px #fff">All</div>
<div class="btn" style="left:133px;top:554px;width:66px;height:40px;background:#5c9e31"></div>
<svg style="left:143px;top:566px" width="15" height="15" viewBox="0 0 15 15"><path d="M7.5 0v15M0 7.5h15" stroke="#f0f0e0" stroke-width="1.5"/></svg>
<div class="t" style="left:162px;top:566px;font-size:14px;color:#f4f4e8;-webkit-text-stroke:0.35px #f4f4e8">New</div>
<div class="btn" style="left:63px;top:599px;width:42px;height:40px;background:#d29a22"></div>
<svg style="left:76px;top:603px" width="16" height="16" viewBox="0 0 16 16"><circle cx="8" cy="8" r="6.8" stroke="#fff" stroke-width="1.4" fill="none"/><path d="M3.2 12.8L12.8 3.2" stroke="#fff" stroke-width="1.4"/></svg>
<div class="t" style="left:69px;top:620px;font-size:14px;color:#fffbe8;-webkit-text-stroke:0.35px #fffbe8">Stop</div>
<div class="btn" style="left:109px;top:599px;width:41px;height:40px;background:#3a8dbb"></div>
<svg style="left:121px;top:603px" width="16" height="16" viewBox="0 0 16 16"><circle cx="8" cy="8" r="6.8" stroke="#fff" stroke-width="1.4" fill="none"/><text x="8" y="12" font-size="10" font-weight="bold" font-family="Liberation Sans" text-anchor="middle" fill="#fff">?</text></svg>
<div class="t" style="left:115px;top:620px;font-size:14px;color:#fff;-webkit-text-stroke:0.35px #fff">Help</div>
<div class="btn" style="left:154px;top:599px;width:53px;height:40px;background:#a8173f"></div>
<svg style="left:174px;top:603px" width="13" height="16" viewBox="0 0 13 16"><rect x="1.5" y="4" width="10" height="11.5" rx="1.5" fill="#f4d7df"/><rect x="0" y="2" width="13" height="2" fill="#f4d7df"/><rect x="4.5" y="0" width="4" height="2.5" fill="#f4d7df"/></svg>
<div class="t" style="left:161px;top:620px;font-size:14px;color:#fbeef2;-webkit-text-stroke:0.35px #fbeef2">Delete</div>
</body></html>
